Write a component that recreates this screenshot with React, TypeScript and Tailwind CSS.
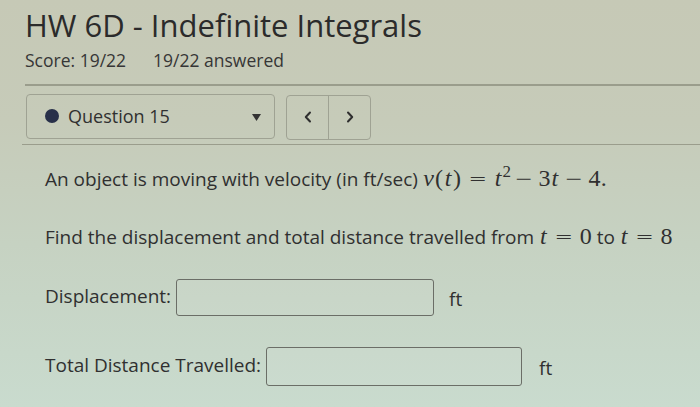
import type { ReactNode } from 'react';

// MathJax-ish glyph box: fixed TeX advance width, glyph centred inside.
function Sym({ w, i, children }: { w: string; i?: boolean; children: ReactNode }) {
  return (
    <span className={`inline-block text-center ${w} ${i ? 'italic' : ''}`}>{children}</span>
  );
}

// relations / binary operators are wider and thinner in the TeX font
function Op({ w, children }: { w: string; children: ReactNode }) {
  return (
    <span className={`inline-block text-center ${w}`}>
      <span className="font-['DejaVu_Sans',sans-serif] text-[0.92em] font-light">{children}</span>
    </span>
  );
}

function Chevron({ dir }: { dir: 'left' | 'right' }) {
  return (
    <svg width="8" height="12" viewBox="0 0 8 12" className="text-[#2f2f2f]">
      <polyline
        points={dir === 'left' ? '6,1.5 1.8,6 6,10.5' : '2,1.5 6.2,6 2,10.5'}
        fill="none"
        stroke="currentColor"
        strokeWidth="2"
        strokeLinecap="round"
        strokeLinejoin="round"
      />
    </svg>
  );
}

function AnswerRow({ label, box, ft }: { label: string; box: string; ft: string }) {
  return (
    <div className="flex items-center">
      <span className="pb-[4px]">{label}</span>
      <div className={`ml-[5px] rounded-[3px] border-[1.5px] border-[#6b6e67] bg-white/[0.04] ${box}`} />
      <span className={`pt-[3px] ${ft}`}>ft</span>
    </div>
  );
}

export default function App() {
  return (
    <div className="w-[700px] h-[407px] overflow-hidden bg-[linear-gradient(180deg,#c6c9b6_0%,#c6cbb9_30%,#c6d2c2_60%,#c9dbce_100%)] font-['Open_Sans',sans-serif] text-[#333]">
      <header className="pl-[25px] pt-[5px]">
        <h1 className="text-[31px] leading-[40px] text-[#2b2b2b]">HW 6D - Indefinite Integrals</h1>
        <div className="mt-[3px] flex gap-[27px] text-[17.5px] leading-[24px] text-[#363636]">
          <span>Score: 19/22</span>
          <span>19/22 answered</span>
        </div>
      </header>

      <div className="ml-[25px] mt-[12px] h-[1.5px] bg-[#9a9d8c]" />

      <div className="ml-[26px] mt-[8px] flex items-start gap-[11px]">
        <div className="flex h-[45px] w-[249px] items-center rounded-[4px] border border-[#9fa293] pl-[18px] pr-[13px]">
          <span className="h-[14px] w-[14px] rounded-full bg-[#283049]" />
          <span className="ml-[9px] text-[18px] text-[#303030]">Question 15</span>
          <svg width="9" height="7" viewBox="0 0 9 7" className="ml-auto mt-[3px]">
            <polygon points="0,0 9,0 4.5,7" fill="#333" />
          </svg>
        </div>
        <div className="mt-[1px] flex h-[45px] w-[85px] rounded-[4px] border border-[#9fa293]">
          <div className="flex flex-1 items-center justify-center border-r border-[#9fa293]">
            <Chevron dir="left" />
          </div>
          <div className="flex flex-1 items-center justify-center">
            <Chevron dir="right" />
          </div>
        </div>
      </div>

      <div className="ml-[22px] mt-[4px] h-[1.5px] bg-[#9a9d8c]" />

      <main className="pl-[45px] text-[19px] leading-[30px] text-[#303030]">
        <p className="mt-[19px] whitespace-nowrap">
          An object is moving with velocity (in ft/sec){' '}
          <span className="font-['Liberation_Serif',serif] text-[24px] leading-none">
            <Sym w="w-[0.485em]" i>v</Sym>
            <Sym w="w-[0.389em]">(</Sym>
            <Sym w="w-[0.361em]" i>t</Sym>
            <Sym w="w-[0.389em]">)</Sym>
            <Op w="w-[1.334em]">=</Op>
            <Sym w="w-[0.361em]" i>t</Sym>
            <span className="inline-block w-[0.4em] text-[0.707em] align-[0.55em]">2</span>
            <Op w="w-[1.222em]">−</Op>
            <Sym w="w-[0.5em]">3</Sym>
            <Sym w="w-[0.361em]" i>t</Sym>
            <Op w="w-[1.222em]">−</Op>
            <Sym w="w-[0.5em]">4</Sym>
            <Sym w="w-[0.278em]">.</Sym>
          </span>
        </p>

        <p className="mt-[28px] whitespace-nowrap">
          Find the displacement and total distance travelled from{' '}
          <span className="font-['Liberation_Serif',serif] text-[24px] leading-none">
            <Sym w="w-[0.361em]" i>t</Sym>
            <Op w="w-[1.334em]">=</Op>
            <Sym w="w-[0.5em]">0</Sym>
          </span>{' '}
          to{' '}
          <span className="font-['Liberation_Serif',serif] text-[24px] leading-none">
            <Sym w="w-[0.361em]" i>t</Sym>
            <Op w="w-[1.334em]">=</Op>
            <Sym w="w-[0.5em]">8</Sym>
          </span>
        </p>

        <div className="mt-[27px]">
          <AnswerRow label="Displacement:" box="h-[37px] w-[258px]" ft="ml-[15px]" />
        </div>
        <div className="mt-[31px]">
          <AnswerRow label="Total Distance Travelled:" box="h-[39px] w-[256px]" ft="ml-[17px]" />
        </div>
      </main>
    </div>
  );
}
